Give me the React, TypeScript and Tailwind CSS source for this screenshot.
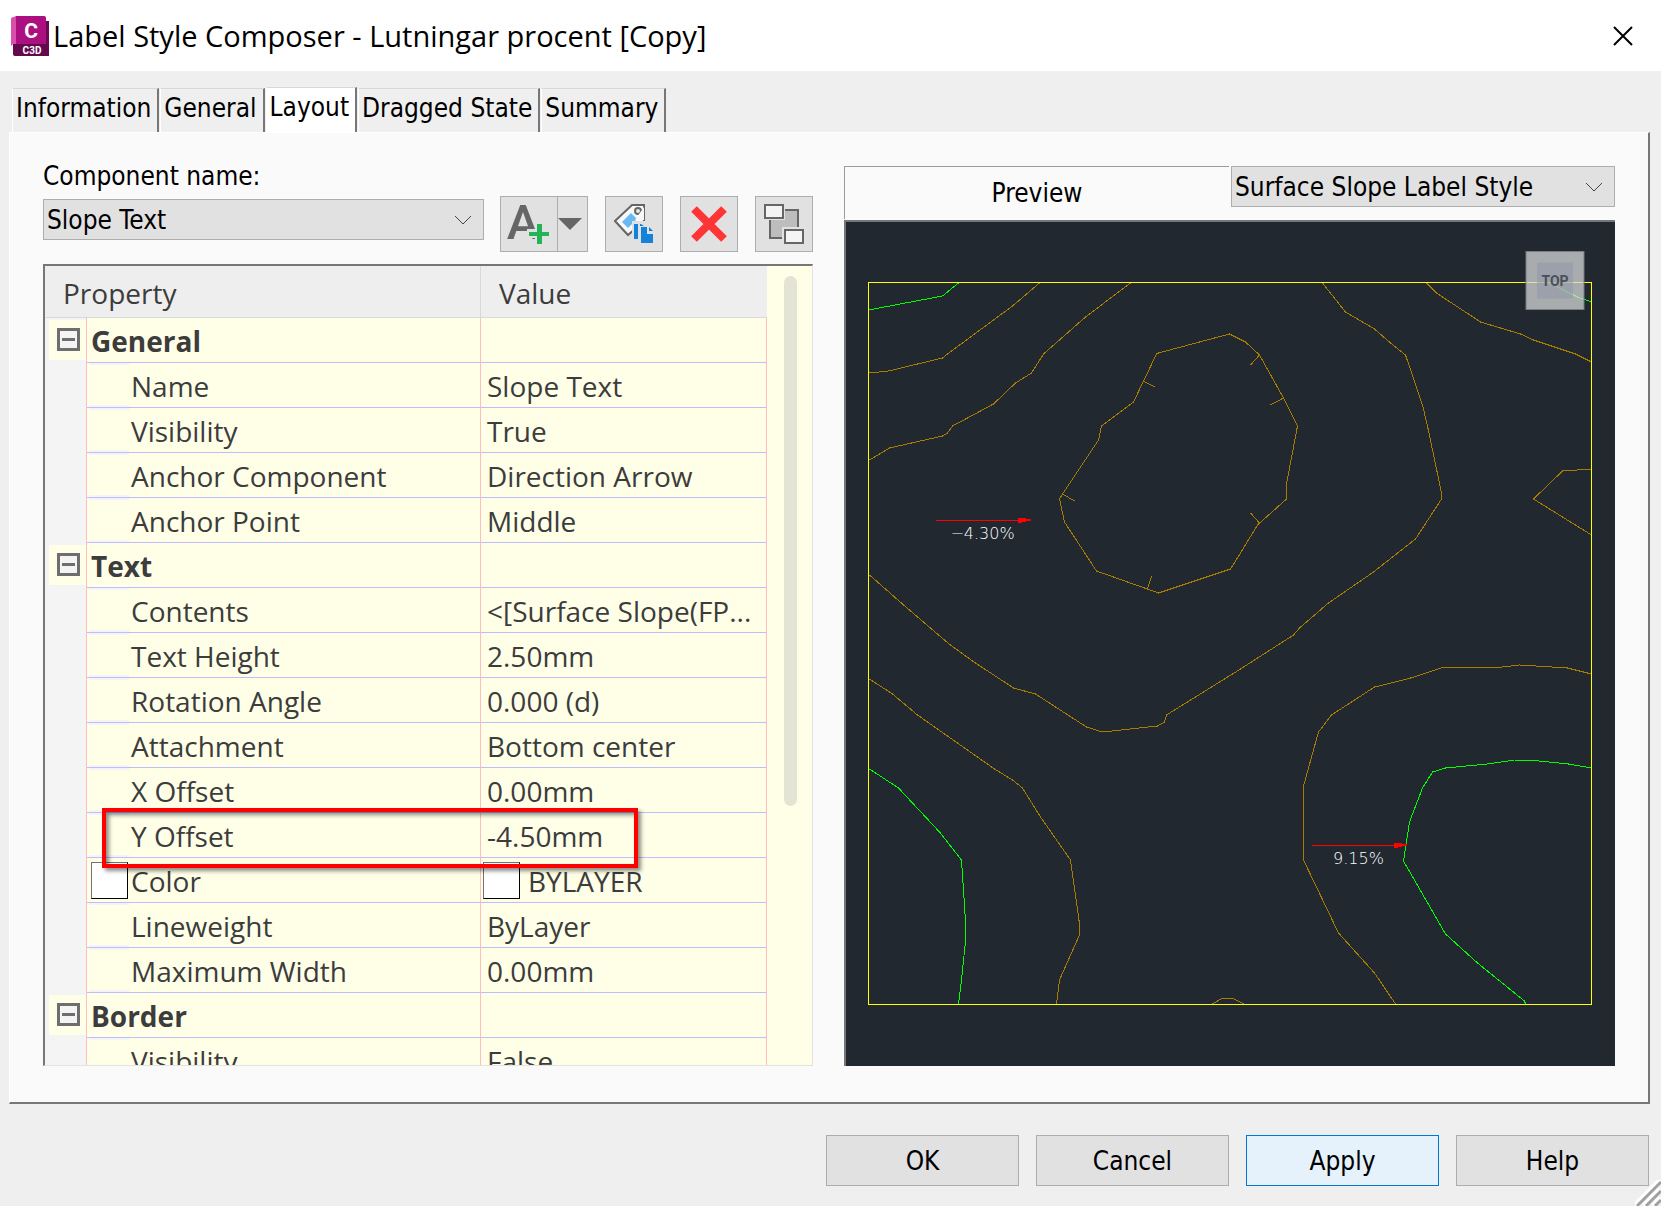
import { useState } from 'react';
import type { ReactNode } from 'react';
import { clsx } from 'clsx';

interface Row {
  name: string;
  value: string;
  swatch?: boolean;
  marked?: boolean;
}

interface Group {
  title: string;
  rows: Row[];
}

const TABS = ['Information', 'General', 'Layout', 'Dragged State', 'Summary'];

const GROUPS: Group[] = [
  {
    title: 'General',
    rows: [
      { name: 'Name', value: 'Slope Text' },
      { name: 'Visibility', value: 'True' },
      { name: 'Anchor Component', value: 'Direction Arrow' },
      { name: 'Anchor Point', value: 'Middle' },
    ],
  },
  {
    title: 'Text',
    rows: [
      { name: 'Contents', value: '<[Surface Slope(FP...' },
      { name: 'Text Height', value: '2.50mm' },
      { name: 'Rotation Angle', value: '0.000 (d)' },
      { name: 'Attachment', value: 'Bottom center' },
      { name: 'X Offset', value: '0.00mm' },
      { name: 'Y Offset', value: '-4.50mm', marked: true },
      { name: 'Color', value: 'BYLAYER', swatch: true },
      { name: 'Lineweight', value: 'ByLayer' },
      { name: 'Maximum Width', value: '0.00mm' },
    ],
  },
  {
    title: 'Border',
    rows: [{ name: 'Visibility', value: 'False' }],
  },
];

// minor contours, in drawing units
const MINOR = [
  '869,372 888,370 942,357 947,353 1012,305 1039,282',
  '869,459 889,447 942,435 947,432 952,425 993,403 1015,382 1031,372 1043,353 1085,316 1130,282',
  '1158,352 1229,333 1245,341 1259,354 1283,397 1297,425 1286,483 1286,498 1257,524 1240,552 1230,568 1158,592 1096,570 1064,521 1059,498 1062,493 1098,439 1101,425 1133,401 1156,353 1158,352',
  '1322,282 1345,311 1374,328 1390,342 1405,354 1422,404 1427,425 1441,492 1441,498 1415,538 1373,571 1328,602 1299,627 1293,634 1240,668 1166,714 1164,721 1157,725 1102,731 1086,726 1035,693 1013,687 972,660 950,644 945,640 902,603 869,574',
  '1426,282 1436,292 1480,321 1520,333 1533,339 1575,353 1591,361',
  '1591,468 1562,470 1533,498 1591,534',
  '869,678 892,693 917,714 994,768 1012,779 1022,787 1040,816 1070,859 1079,923 1079,934 1059,979 1056,1003',
  '1212,1003 1222,997 1232,997 1243,1003',
  '1591,673 1567,667 1519,664 1493,667 1487,666 1444,666 1407,678 1374,686 1331,714 1318,731 1303,785 1303,859 1338,932 1374,972 1395,1003',
  // depression ticks
  '1143,380 1154,386',
  '1259,354 1250,364',
  '1283,397 1270,404',
  '1062,493 1074,500',
  '1259,522 1250,512',
  '1147,588 1151,575',
];

const MAJOR = [
  '868,309 942,295 958,282',
  '1549,282 1577,296 1591,301',
  '869,768 898,787 939,831 961,859 965,920 965,940 961,979 958,1003',
  '1591,767 1568,763 1528,759 1514,759 1487,763 1445,767 1432,771 1422,787 1409,821 1403,860 1445,933 1477,962 1524,1000 1525,1003',
];

function AppIcon() {
  return (
    <svg width="38" height="40" viewBox="0 0 38 40" aria-hidden="true">
      <path d="M0 2 5 0v28H2L0 30z" fill="#d94fae" />
      <rect x="34" y="5" width="4" height="24" fill="#6b0a52" />
      <path d="M5 0h28q2 0 2 2v26H5z" fill="#ab0f80" />
      <path d="M2 28h36v12H4q-2 0-2-2z" fill="#66084d" />
      <text x="20" y="22" textAnchor="middle" fontSize="21" fontWeight="700" fill="#fff" className="font-['Roboto',sans-serif]">C</text>
      <text x="21" y="38" textAnchor="middle" fontSize="10" fontWeight="700" fill="#fff" className="font-['Roboto',sans-serif]">C3D</text>
    </svg>
  );
}

function AddTextIcon() {
  return (
    <svg width="56" height="54" viewBox="0 0 56 54" className="overflow-visible" aria-hidden="true">
      <text x="22" y="42" textAnchor="middle" fontSize="49" fontWeight="500" fill="#666" className="font-['Roboto',sans-serif]">A</text>
      <path d="M34 24h9v8h8v9h-8v8h-9v-8h-8v-9h8z" fill="#e1e1e1" />
      <path d="M36 27h5v8h7v4h-7v8h-5v-8h-8v-4h8z" fill="#22b455" />
    </svg>
  );
}

function CopyTagIcon() {
  return (
    <svg width="40" height="42" viewBox="0 0 40 42" aria-hidden="true">
      <path d="M18 2h12v16L14 32 1 18z" fill="#f8f8f8" stroke="#666" strokeWidth="2" />
      <circle cx="24" cy="8" r="3" fill="#e6e6e6" stroke="#666" strokeWidth="2" />
      <path d="m17 10 6 6-9 9-6-6z" fill="#66b9f5" />
      <path d="M18 18h22v24H18z" fill="#e1e1e1" />
      <path d="M30 4v13h-9z" fill="#f8f8f8" />
      <path d="M20 21h4v15h-4zM27 24h6v7h6v9H27z" fill="#1482d8" />
      <path d="M26 21h1l3 2h-4zM35 24l4 4h-4z" fill="#1482d8" />
    </svg>
  );
}

function OrderIcon() {
  return (
    <svg width="40" height="40" viewBox="0 0 40 40" aria-hidden="true">
      <rect x="6" y="6" width="28" height="28" fill="#bdbdbd" stroke="#666" strokeWidth="2" />
      <rect x="0" y="0" width="21" height="16" fill="#e1e1e1" />
      <rect x="18" y="23" width="22" height="17" fill="#e1e1e1" />
      <rect x="1" y="1" width="18" height="13" fill="#f4f4f4" stroke="#666" strokeWidth="2" />
      <rect x="21" y="26" width="18" height="13" fill="#f4f4f4" stroke="#666" strokeWidth="2" />
    </svg>
  );
}

function Chevron() {
  return (
    <svg width="18" height="10" viewBox="0 0 18 10" className="pointer-events-none absolute right-3 top-4" aria-hidden="true">
      <path d="m1 1 8 8 8-8" fill="none" stroke="#444" />
    </svg>
  );
}

function ToolButton({ label, children, className }: { label: string; children: ReactNode; className?: string }) {
  return (
    <button aria-label={label} className={clsx('flex h-14 items-center border border-[#adadad] bg-[#e1e1e1]', className ?? 'w-[58px] justify-center')}>
      {children}
    </button>
  );
}

function Arrow({ x, y, label }: { x: number; y: number; label: string }) {
  return (
    <g>
      <path d={`M${x} ${y}h95`} stroke="#f00" />
      <path d={`M${x + 82} ${y - 2.5}h4l6 1.5h3v2h-3l-6 1.5h-4z`} fill="#f00" />
      <text x={x + 47} y={y + 19} textAnchor="middle" fontSize="16" fill="#fff" className="font-['DejaVu_Sans',sans-serif] font-extralight">
        {label}
      </text>
    </g>
  );
}

function Preview() {
  return (
    <svg viewBox="846 222 769 843" className="block h-full w-full" role="img" aria-label="Surface slope preview">
      <g transform="translate(.5 .5)" fill="none" shapeRendering="crispEdges">
        {MINOR.map(p => <polyline key={p} points={p} stroke="#a87c00" />)}
        {MAJOR.map(p => <polyline key={p} points={p} stroke="#00ff00" />)}
        <rect x="868" y="281" width="723" height="722" stroke="#ffff00" />
        <Arrow x={935} y={519} label="−4.30%" />
        <Arrow x={1311} y={844} label="9.15%" />
      </g>
      <rect x="1526" y="251" width="58" height="58" fill="#d6d8d8" fillOpacity=".75" stroke="#777c7e" />
      <rect x="1537" y="262" width="36" height="36" fill="#9094a6" fillOpacity=".5" />
      <text x="1555" y="285" textAnchor="middle" fontSize="14" fontWeight="700" fill="#4a4f5a" className="font-['Roboto',sans-serif]">TOP</text>
    </svg>
  );
}

function PropertyRow({ row }: { row: Row }) {
  return (
    <tr className="h-[45px]">
      <td className="border-r border-[#ffbdbd] bg-[#f4f4f4]" />
      <td className="relative border-r border-b border-r-[#ffbdbd] border-b-[#bdbdff] p-0">
        <div className="flex h-11 items-center gap-0.5 pl-0.5">
          {row.swatch
            ? <span className="mr-px ml-0.5 size-[37px] border border-t-neutral-500 border-r-black border-b-black border-l-neutral-500 bg-white" />
            : <span className="h-11 w-10 border-y-2 border-[#f4f4f8]" />}
          <span className="pt-0.5">{row.name}</span>
        </div>
        {row.marked && (
          <div className="absolute -top-[5px] left-[15px] z-10 h-[60px] w-[536px] border-4 border-[#f00] shadow-[3px_3px_4px_rgba(0,0,0,0.45),inset_3px_3px_4px_rgba(0,0,0,0.45)]" />
        )}
      </td>
      <td className="border-r border-b border-r-[#ffbdbd] border-b-[#bdbdff] p-0">
        <div className="flex h-11 items-center whitespace-nowrap">
          {row.swatch
            ? <span className="mr-2 ml-0.5 size-[37px] border border-t-neutral-500 border-r-black border-b-black border-l-neutral-500 bg-white" />
            : <span className="w-1.5" />}
          <span className="pt-0.5">{row.value}</span>
        </div>
      </td>
    </tr>
  );
}

function PropertyTable() {
  const [closed, setClosed] = useState<string[]>([]);

  function toggle(title: string) {
    setClosed(c => c.includes(title) ? c.filter(t => t !== title) : [...c, title]);
  }

  return (
    <div className="flex min-h-0 flex-1 overflow-hidden border-t-2 border-r border-b border-l-2 border-t-[#777] border-r-[#e3e3e3] border-b-[#e3e3e3] border-l-[#777] bg-[#ffffe8] font-['Open_Sans',sans-serif] text-[28px] leading-10 text-[#3c3c3c]">
      <div className="min-w-0 flex-1">
        <table className="w-full table-fixed border-separate border-spacing-0">
          <colgroup>
            <col className="w-[42px]" />
            <col className="w-[394px]" />
            <col />
          </colgroup>
          <thead>
            <tr className="h-[52px] bg-[#eee] text-left">
              <th colSpan={2} className="border-r border-b border-[#d9d9d9] p-0 pt-[3px] pl-[18px] font-normal">Property</th>
              <th className="border-b border-[#d9d9d9] p-0 pt-[3px] pl-[18px] font-normal">Value</th>
            </tr>
          </thead>
          {GROUPS.map(g => (
            <tbody key={g.title}>
              <tr className="h-[45px]">
                <td className="border-r border-[#ffbdbd] bg-[#f4f4f4] p-0 pb-0.5 pl-1">
                  <div className="flex h-10 items-center bg-[#ffffe8] pl-2">
                    <button
                      aria-label={`Toggle ${g.title}`}
                      aria-expanded={!closed.includes(g.title)}
                      onClick={() => toggle(g.title)}
                      className="flex size-[23px] items-center justify-center border-[3px] border-[#6e6e6e] bg-[#f4f4f4]"
                    >
                      <span className="h-[3px] w-[13px] bg-[#6e6e6e]" />
                    </button>
                  </div>
                </td>
                <td className="border-r border-b border-r-[#ffbdbd] border-b-[#bdbdff] p-0 pt-0.5 pl-1 font-bold">{g.title}</td>
                <td className="border-r border-b border-r-[#ffbdbd] border-b-[#bdbdff]" />
              </tr>
              {!closed.includes(g.title) && g.rows.map(r => <PropertyRow key={r.name} row={r} />)}
            </tbody>
          ))}
        </table>
      </div>
      <div className="w-[45px] pt-[10px] pl-[17px]">
        <div className="h-[530px] w-[13px] rounded-full bg-[#e4e4d4]" />
      </div>
    </div>
  );
}

export default function App() {
  const [tab, setTab] = useState('Layout');

  return (
    <div className="relative flex h-screen flex-col bg-[#efefef] font-['DejaVu_Sans_Condensed','DejaVu_Sans',sans-serif] text-[26px] leading-8 text-black">
      <header className="flex h-[71px] shrink-0 items-center bg-white pr-7 pl-[11px]">
        <AppIcon />
        <h1 className="ml-1 flex-1 font-['Open_Sans',sans-serif] text-[29px] leading-10">Label Style Composer - Lutningar procent [Copy]</h1>
        <button aria-label="Close">
          <svg width="20" height="20" viewBox="0 0 20 20" aria-hidden="true">
            <path d="m1 1 18 18M19 1 1 19" stroke="#000" strokeWidth="2" />
          </svg>
        </button>
      </header>

      <div role="tablist" className="flex shrink-0 items-end gap-px pt-4 pl-3">
        {TABS.map(t => (
          <button
            key={t}
            role="tab"
            aria-selected={t === tab}
            onClick={() => setTab(t)}
            className={clsx(
              'border-t border-r-2 border-l border-t-[#d8d8d8] border-r-[#777] border-l-white pr-1.5 pb-1.5 pl-[3px]',
              t === tab ? 'h-[45px] bg-white' : 'h-11',
            )}
          >
            {t}
          </button>
        ))}
      </div>

      <main className="mr-[11px] ml-[9px] grid min-h-0 flex-1 grid-cols-2 grid-rows-1 gap-[30px] border-t border-r-2 border-b-2 border-l border-t-white border-r-[#777] border-b-[#777] border-l-white bg-[#fafafa] pt-[33px] pr-[33px] pb-9 pl-[33px]">
        <section className="flex min-h-0 min-w-0 flex-col pr-px">
          <div className="mb-3 flex items-end justify-between">
            <div className="w-[441px] pb-3">
              <label htmlFor="component" className="block h-[33px] leading-5">Component name:</label>
              <div className="relative">
                <select id="component" className="h-[41px] w-full appearance-none border border-[#adadad] bg-[#e1e1e1] pl-[3px]">
                  <option>Slope Text</option>
                </select>
                <Chevron />
              </div>
            </div>
            <div className="flex gap-[17px]">
              <div className="flex">
                <ToolButton label="Create text component"><AddTextIcon /></ToolButton>
                <ToolButton label="More component types" className="w-[30px] border-l-0">
                  <svg width="24" height="12" viewBox="0 0 24 12" aria-hidden="true"><path d="M0 0h24L12 12z" fill="#666" /></svg>
                </ToolButton>
              </div>
              <ToolButton label="Copy component"><CopyTagIcon /></ToolButton>
              <ToolButton label="Delete component">
                <svg width="36" height="36" viewBox="0 0 36 36" aria-hidden="true">
                  <path d="m3 3 30 30M33 3 3 33" stroke="#ff3434" strokeWidth="8" />
                </svg>
              </ToolButton>
              <ToolButton label="Component draw order"><OrderIcon /></ToolButton>
            </div>
          </div>
          <PropertyTable />
        </section>

        <section className="flex min-h-0 min-w-0 flex-col">
          <div className="flex gap-0.5">
            <div className="flex h-[53px] flex-1 items-center justify-center border-t border-l border-[#9c9c9c]">Preview</div>
            <div className="relative flex-1">
              <select aria-label="Label style type" className="h-[41px] w-full appearance-none border border-[#adadad] bg-[#e1e1e1] pl-[3px]">
                <option>Surface Slope Label Style</option>
              </select>
              <Chevron />
            </div>
          </div>
          <div className="mt-px min-h-0 flex-1 border-t-2 border-l-2 border-[#777] bg-[#212830]">
            <Preview />
          </div>
        </section>
      </main>

      <footer className="flex shrink-0 justify-end gap-[17px] pt-[31px] pr-3 pb-5">
        {['OK', 'Cancel', 'Apply', 'Help'].map(b => (
          <button
            key={b}
            className={clsx('h-[51px] w-[193px] border', b === 'Apply' ? 'border-[#0078d7] bg-[#e5f1fb]' : 'border-[#adadad] bg-[#e1e1e1]')}
          >
            {b}
          </button>
        ))}
      </footer>

      <svg width="26" height="26" viewBox="0 0 26 26" className="absolute right-0 bottom-0" aria-hidden="true">
        <path d="M0 26 26 0M9 26 26 9M18 26l8-8" stroke="#fff" strokeWidth="6" />
        <path d="M2 26 26 2M11 26l15-15M20 26l6-6" stroke="#a0a0a0" strokeWidth="3" />
      </svg>
    </div>
  );
}
